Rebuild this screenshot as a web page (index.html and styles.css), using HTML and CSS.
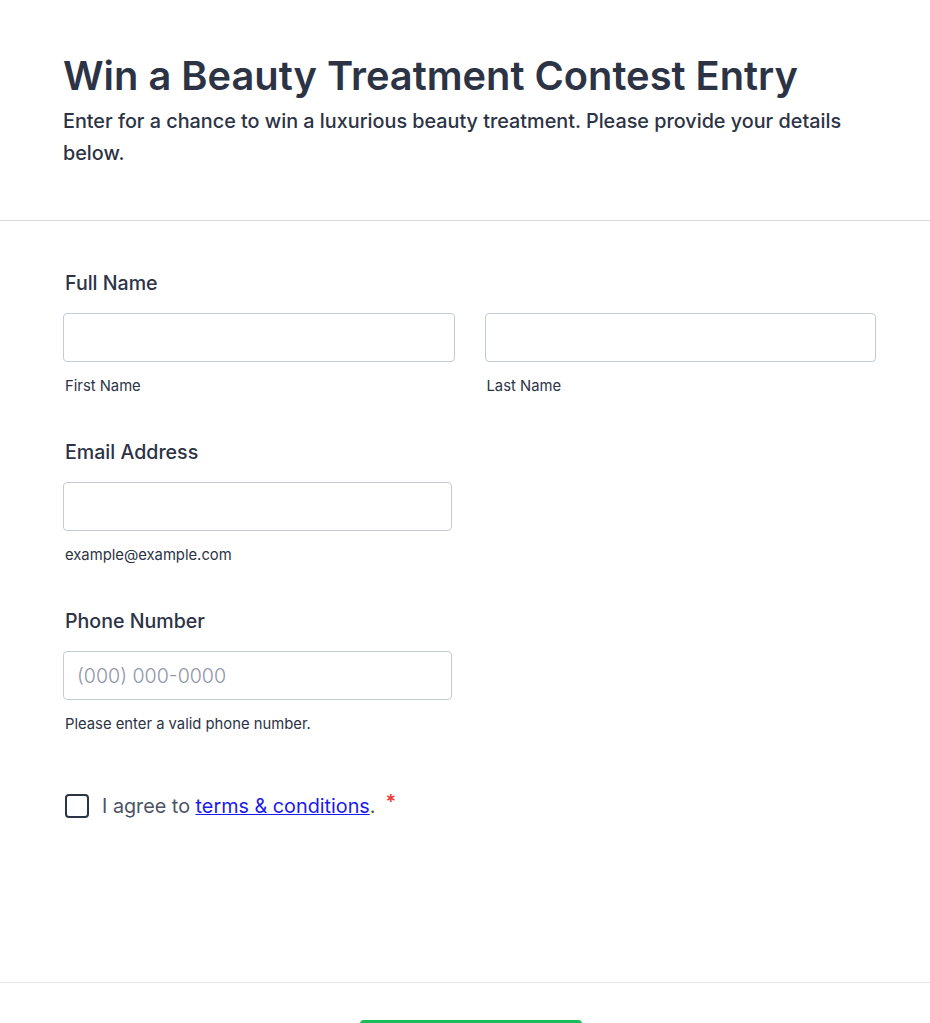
FILE: index.html
```html
<!DOCTYPE html>
<html lang="en">
<head>
    <meta charset="UTF-8">
    <meta name="viewport" content="width=device-width, initial-scale=1.0">
    <title>Win a Beauty Treatment Contest Entry</title>
    <link rel="stylesheet" href="styles.css">
</head>
<body>
    <div class="form-header">
        <h1 class="form-title">Win a Beauty Treatment Contest Entry</h1>
        <p class="form-subtitle">Enter for a chance to win a luxurious beauty treatment. Please provide your details below.</p>
    </div>

    <form class="form-body">
        <div class="field">
            <label class="field-label">Full Name</label>
            <div class="name-row">
                <div class="name-col">
                    <input type="text" class="text-input">
                    <span class="sublabel">First Name</span>
                </div>
                <div class="name-col">
                    <input type="text" class="text-input">
                    <span class="sublabel">Last Name</span>
                </div>
            </div>
        </div>

        <div class="field">
            <label class="field-label">Email Address</label>
            <input type="email" class="text-input half">
            <span class="sublabel">example@example.com</span>
        </div>

        <div class="field">
            <label class="field-label">Phone Number</label>
            <input type="tel" class="text-input half" placeholder="(000) 000-0000">
            <span class="sublabel">Please enter a valid phone number.</span>
        </div>

        <div class="agree">
            <span class="checkbox"></span>
            <span class="agree-text">I agree to <a href="#" class="terms-link">terms &amp; conditions</a>.</span>
            <span class="required">*</span>
        </div>
    </form>

    <div class="form-footer">
        <button type="submit" class="submit-btn">Submit</button>
    </div>
</body>
</html>
```

FILE: styles.css
```css
body {
    margin: 0;
    padding: 0;
    background: #ffffff;
    font-family: Inter, "Noto Sans", sans-serif;
    color: #2c3345;
}

.form-header {
    padding: 50px 63px 51px 63px;
    border-bottom: 1px solid #d8d8e5;
}

.form-title {
    margin: 0 0 3px 0;
    font-size: 39.8px;
    line-height: 52px;
    font-weight: 600;
    color: #2c3345;
}

.form-subtitle {
    margin: 0;
    font-size: 19.8px;
    line-height: 32px;
    font-weight: 500;
    color: #2c3345;
    max-width: 800px;
}

.form-body {
    padding: 50px 54px 0 63px;
    height: 762px;
    box-sizing: border-box;
    border-bottom: 1px solid #e6e9ee;
}

.field {
    display: flex;
    flex-direction: column;
    align-items: flex-start;
    margin-bottom: 45px;
}

.field-label {
    font-size: 19.6px;
    line-height: 24px;
    font-weight: 500;
    margin-left: 2px;
    margin-bottom: 18px;
}

.name-row {
    display: grid;
    grid-template-columns: 1fr 1fr;
    gap: 30px;
    width: 100%;
}

.name-col {
    display: flex;
    flex-direction: column;
}

.text-input {
    box-sizing: border-box;
    width: 100%;
    height: 49px;
    border: 1px solid #c3cad8;
    border-radius: 4px;
    padding: 0 13px;
    font-family: Inter, "Noto Sans", sans-serif;
    font-size: 19.6px;
    color: #2c3345;
    background: #ffffff;
}

.text-input.half {
    width: 389px;
}

.text-input::placeholder {
    color: #8f96a8;
    font-weight: 300;
}

.sublabel {
    font-size: 14.8px;
    line-height: 18px;
    margin-top: 15px;
    margin-left: 2px;
    color: #2c3345;
}

.agree {
    display: flex;
    align-items: center;
    margin-top: 61px;
    margin-left: 2px;
}

.checkbox {
    box-sizing: border-box;
    width: 24px;
    height: 24px;
    border: 2px solid #2c3345;
    border-radius: 4px;
    margin-right: 13px;
}

.agree-text {
    font-size: 19.8px;
    line-height: 24px;
    color: #4b5365;
}

.terms-link {
    color: #1a1aee;
}

.required {
    color: #f23a3c;
    font-size: 19.8px;
    font-weight: 600;
    margin-left: 10px;
    position: relative;
    top: -4px;
}

.form-footer {
    display: flex;
    justify-content: center;
    padding: 37px 0 40px 12px;
}

.submit-btn {
    width: 222px;
    height: 48px;
    background: #18bd5b;
    border: none;
    border-radius: 4px;
    color: #ffffff;
    font-family: Inter, "Noto Sans", sans-serif;
    font-size: 16px;
    font-weight: 600;
}
```
